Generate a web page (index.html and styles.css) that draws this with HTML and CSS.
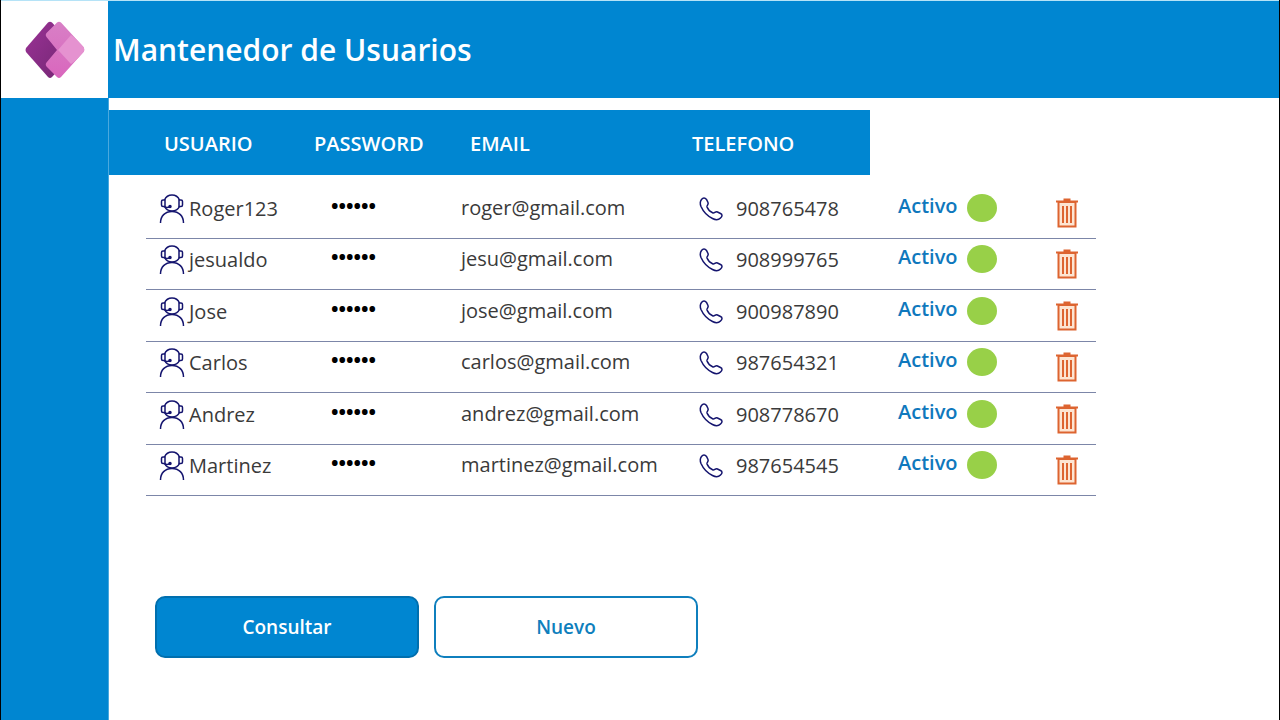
FILE: index.html
```html
<!DOCTYPE html>
<html lang="es">
<head>
	<meta charset="utf-8"/>
	<title>Mantenedor de Usuarios</title>
	<meta name="viewport" content="width=device-width, initial-scale=1.0"/>
	<link rel="stylesheet" href="styles.css">
</head>
<body>
	<!-- iconos compartidos -->
	<svg class="sprite" aria-hidden="true">
		<symbol id="ico-user" viewBox="0 0 26 30">
			<path d="M5.500 6C7 2.500 10 1 13 1S19 2.500 20.500 6M5.500 12.500C7 15.500 10 17 13 17S19 15.500 20.500 12.500"/>
			<path d="M6 6H4Q2.500 6 2.500 7.500V11Q2.500 12.500 4 12.500H6ZM20 6H22Q23.500 6 23.500 7.500V11Q23.500 12.500 22 12.500H20Z"/>
			<path d="M5.500 12.500Q7 14 10.500 13"/>
			<circle class="mic" cx="11" cy="12.500" r="1"/>
			<path d="M1.500 29C1.500 22 6 17.500 13 17.500S24.500 22 24.500 29"/>
		</symbol>
		<symbol id="ico-phone" viewBox="0 0 26 26">
			<path d="M3.500 3.500C5 1.500 7 1.500 8.500 3.500L10 6.500C11 8.500 8.500 9.500 9 11C10 13.500 12.500 16 15 17C16.500 17.500 17.500 15 19.500 16L22.500 17.500C24.500 18.500 24.500 20 22.500 22C20.500 24 17.500 24 14.500 22.500C9.500 20 5 15 3 10.500C2 8 2 5.500 3.500 3.500Z"/>
		</symbol>
		<symbol id="ico-trash" viewBox="0 0 22 30">
			<path class="can" d="M2.500 4V28.500H19.500V4Z"/>
			<path d="M0 3.500H22M7.500 1.500H14.500"/>
			<path class="bars" d="M7 8V25M11 8V25M15 8V25"/>
		</symbol>
	</svg>

	<header class="top">
		<div class="logo">
			<svg viewBox="0 0 60 58" aria-hidden="true">
				<defs>
					<linearGradient id="dark" x1="0" y1="0" x2="1" y2="1">
						<stop offset="0" stop-color="#9b3296"/>
						<stop offset="1" stop-color="#742774"/>
					</linearGradient>
					<linearGradient id="pink" x1="0" y1="0" x2="0" y2="1">
						<stop offset="0" stop-color="#d880c6"/>
						<stop offset="1" stop-color="#d966bd"/>
					</linearGradient>
					<clipPath id="right">
						<path d="M32 1.500Q34 0 36 1.500L58.500 26Q60 29 58.500 31L36 56Q34 58 32 56L21.500 45.500Q20 43.500 21.500 41.500L32 29L21.500 16Q20 14 21.500 12Z"/>
					</clipPath>
				</defs>
				<path fill="url(#dark)" d="M23 1.500Q25 0 27 1.500L40 16V42L27 56Q25 58 23 56L1 31Q0 29 1 27Z"/>
				<g clip-path="url(#right)">
					<path fill="url(#pink)" d="M10 0H60V58H10Z"/>
					<path fill="#e592d0" d="M46 14L33 29L46 43L65 29Z"/>
				</g>
			</svg>
		</div>
		<h1>Mantenedor de Usuarios</h1>
	</header>

	<div class="wrap">
		<nav class="side"></nav>
		<main class="content">
			<table class="users">
				<thead>
					<tr>
						<th>USUARIO</th>
						<th>PASSWORD</th>
						<th>EMAIL</th>
						<th>TELEFONO</th>
					</tr>
				</thead>
				<tbody>
					<tr>
						<td class="user"><svg><use href="#ico-user"/></svg>Roger123</td>
						<td class="pass">••••••</td>
						<td class="email">roger@gmail.com</td>
						<td class="phone"><svg><use href="#ico-phone"/></svg>908765478</td>
						<td class="state">Activo<i></i></td>
						<td class="del"><button type="button" aria-label="Eliminar"><svg><use href="#ico-trash"/></svg></button></td>
					</tr>
					<tr>
						<td class="user"><svg><use href="#ico-user"/></svg>jesualdo</td>
						<td class="pass">••••••</td>
						<td class="email">jesu@gmail.com</td>
						<td class="phone"><svg><use href="#ico-phone"/></svg>908999765</td>
						<td class="state">Activo<i></i></td>
						<td class="del"><button type="button" aria-label="Eliminar"><svg><use href="#ico-trash"/></svg></button></td>
					</tr>
					<tr>
						<td class="user"><svg><use href="#ico-user"/></svg>Jose</td>
						<td class="pass">••••••</td>
						<td class="email">jose@gmail.com</td>
						<td class="phone"><svg><use href="#ico-phone"/></svg>900987890</td>
						<td class="state">Activo<i></i></td>
						<td class="del"><button type="button" aria-label="Eliminar"><svg><use href="#ico-trash"/></svg></button></td>
					</tr>
					<tr>
						<td class="user"><svg><use href="#ico-user"/></svg>Carlos</td>
						<td class="pass">••••••</td>
						<td class="email">carlos@gmail.com</td>
						<td class="phone"><svg><use href="#ico-phone"/></svg>987654321</td>
						<td class="state">Activo<i></i></td>
						<td class="del"><button type="button" aria-label="Eliminar"><svg><use href="#ico-trash"/></svg></button></td>
					</tr>
					<tr>
						<td class="user"><svg><use href="#ico-user"/></svg>Andrez</td>
						<td class="pass">••••••</td>
						<td class="email">andrez@gmail.com</td>
						<td class="phone"><svg><use href="#ico-phone"/></svg>908778670</td>
						<td class="state">Activo<i></i></td>
						<td class="del"><button type="button" aria-label="Eliminar"><svg><use href="#ico-trash"/></svg></button></td>
					</tr>
					<tr>
						<td class="user"><svg><use href="#ico-user"/></svg>Martinez</td>
						<td class="pass">••••••</td>
						<td class="email">martinez@gmail.com</td>
						<td class="phone"><svg><use href="#ico-phone"/></svg>987654545</td>
						<td class="state">Activo<i></i></td>
						<td class="del"><button type="button" aria-label="Eliminar"><svg><use href="#ico-trash"/></svg></button></td>
					</tr>
				</tbody>
			</table>
			<div class="actions">
				<button type="button" class="btn primary">Consultar</button>
				<button type="button" class="btn">Nuevo</button>
			</div>
		</main>
	</div>
</body>
</html>
```
FILE: styles.css
```css
*{margin:0; padding:0; box-sizing:border-box;}
body{
	display:flex; flex-direction:column; min-height:100vh;
	border:solid #000; border-width:0 1px;
	background-color:#fff; color:#3a3a3a;
	font-family:"Open Sans", "Noto Sans", sans-serif; font-size:20px; line-height:28px;
}
button{font-family:inherit; font-size:inherit; cursor:pointer;}
.sprite{display:none;}

/* cabecera */
.top{display:flex; align-items:center; height:98px; border-top:1px solid #b5e3f7; background-color:#0086d1;}
	.logo{display:flex; align-items:center; justify-content:center; width:107px; height:100%; background-color:#fff;}
		.logo svg{width:60px; height:58px;}
	.top h1{padding-left:5px; color:#fff; font-size:30px; line-height:40px; font-weight:600;}

.wrap{display:flex; flex:1;}
	.side{width:107px; flex:none; background-color:#0086d1;}
	.content{flex:1; padding-top:12px; border-left:1px solid #4aa9de;}

/* tabla de usuarios */
.users, .users thead, .users tbody{display:block;}
.users tr{display:grid; grid-template-columns:172px 143px 237px 200px 158px 40px;}
.users thead tr{
	align-items:center; width:761px; height:65px; padding:2px 0 0 37px;
	grid-template-columns:168px 156px 222px 178px; background-color:#0086d1;
}
	.users th{color:#fff; font-size:20px; font-weight:600; text-align:left;}
	.users th:first-child{padding-left:18px;}
.users tbody{width:950px; margin-left:37px; padding-top:12px;}
.users tbody tr{height:52px; border-bottom:1px solid #7c86a8;}
.users tbody tr:nth-child(even){height:51px;}
	.users td{display:flex; align-items:center; padding-bottom:10px;}
	.users .user{padding:0 0 8px 13px;}
		.user svg{width:26px; height:30px; margin-right:4px;}
	.user svg, .phone svg{flex:none; fill:none; stroke:#14146e; stroke-width:1.5;}
	.mic{fill:#14146e;}
	.users .pass{padding:0 0 14px 13px; color:#000; font-weight:700;}
	.users .phone{padding-bottom:8px;}
	.phone svg{width:26px; height:26px; margin-right:12px;}
	.users .state{padding-bottom:14px; color:#0f78bd; font-weight:600;}
		.state i{width:30px; height:28px; margin:4px 0 0 9px; border-radius:50%; background-color:#98d048;}
	.users .del{padding-bottom:0;}
	.del button{display:flex; border:0; background:none;}
		.del svg{width:22px; height:30px; fill:none; stroke:#dd6430; stroke-width:2;}
		.can{fill:#fde5d2;}

/* botones */
.actions{display:flex; gap:15px; padding:100px 0 0 46px;}
	.btn{width:264px; height:62px; border:2px solid #0f7fbd; border-radius:10px; background-color:#fff; color:#0f7fbd; font-size:19px; font-weight:600;}
	.btn.primary{border-color:#006fae; background-color:#0086d1; color:#fff;}
```
